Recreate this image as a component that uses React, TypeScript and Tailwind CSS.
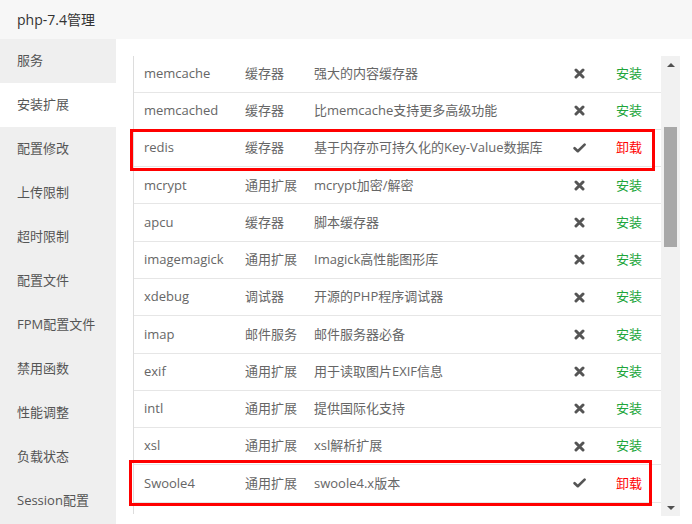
import React from 'react';

type Ext = {
  name: string;
  type: string;
  desc: string;
  installed: boolean;
};

const menu = [
  '服务',
  '安装扩展',
  '配置修改',
  '上传限制',
  '超时限制',
  '配置文件',
  'FPM配置文件',
  '禁用函数',
  '性能调整',
  '负载状态',
  'Session配置',
];

const exts: Ext[] = [
  { name: 'memcache', type: '缓存器', desc: '强大的内容缓存器', installed: false },
  { name: 'memcached', type: '缓存器', desc: '比memcache支持更多高级功能', installed: false },
  { name: 'redis', type: '缓存器', desc: '基于内存亦可持久化的Key-Value数据库', installed: true },
  { name: 'mcrypt', type: '通用扩展', desc: 'mcrypt加密/解密', installed: false },
  { name: 'apcu', type: '缓存器', desc: '脚本缓存器', installed: false },
  { name: 'imagemagick', type: '通用扩展', desc: 'Imagick高性能图形库', installed: false },
  { name: 'xdebug', type: '调试器', desc: '开源的PHP程序调试器', installed: false },
  { name: 'imap', type: '邮件服务', desc: '邮件服务器必备', installed: false },
  { name: 'exif', type: '通用扩展', desc: '用于读取图片EXIF信息', installed: false },
  { name: 'intl', type: '通用扩展', desc: '提供国际化支持', installed: false },
  { name: 'xsl', type: '通用扩展', desc: 'xsl解析扩展', installed: false },
  { name: 'Swoole4', type: '通用扩展', desc: 'swoole4.x版本', installed: true },
  { name: 'fileinfo', type: '通用扩展', desc: '通用扩展fileinfo库', installed: false },
];

const TimesIcon = () => (
  <svg width="11" height="11" viewBox="0 0 11 11" aria-hidden>
    <path d="M2 2 L9 9 M9 2 L2 9" stroke="#555" strokeWidth="3" strokeLinecap="round" />
  </svg>
);

const CheckIcon = () => (
  <svg width="13" height="10" viewBox="0 0 13 10" aria-hidden>
    <path d="M1.6 5.2 L4.8 8.2 L11.6 1.6" stroke="#555" strokeWidth="2.6" fill="none" strokeLinecap="round" strokeLinejoin="round" />
  </svg>
);

export default function App() {
  return (
    <div
      className="w-[692px] h-[524px] overflow-hidden bg-white flex flex-col text-[13px]"
      style={{ fontFamily: '"Open Sans", "Noto Sans", "Noto Sans CJK SC", sans-serif' }}
    >
      <div className="h-[39px] shrink-0 bg-[#f7f7f7] flex items-center pl-[17px] text-[14px] text-[#333]">
        php-7.4管理
      </div>
      <div className="flex flex-1 min-h-0">
        <div className="w-[116px] shrink-0 bg-[#efefef]">
          {menu.map((m, i) => (
            <div
              key={m}
              className={`h-[44px] flex items-center pl-[17px] text-[#555] ${i === 1 ? 'bg-white' : ''}`}
            >
              {m}
            </div>
          ))}
        </div>
        <div className="flex-1 relative pt-[17px] pl-[17px]">
          <div className="flex h-[460px] w-[547px]">
            <div className="w-[528px] h-[458px] border-l border-[#ddd] overflow-hidden">
              <div className="-mt-[0.6px]">
                {exts.map((e) => (
                  <div
                    key={e.name}
                    className="h-[37.27px] box-border border-b border-[#e6e6e6] flex items-center text-[#666]"
                  >
                    <div className="w-[101px] pl-[10px] shrink-0">{e.name}</div>
                    <div className="w-[69px] pl-[10px] shrink-0">{e.type}</div>
                    <div className="w-[253px] pl-[10px] shrink-0 whitespace-nowrap">{e.desc}</div>
                    <div className="w-[44px] shrink-0 flex justify-center">
                      {e.installed ? <CheckIcon /> : <TimesIcon />}
                    </div>
                    <div className={`pl-[15px] ${e.installed ? 'text-[#ff0000]' : 'text-[#20a53a]'}`}>
                      {e.installed ? '卸载' : '安装'}
                    </div>
                  </div>
                ))}
              </div>
            </div>
            <div className="w-[19px] shrink-0 bg-[#f1f1f1] flex flex-col items-center">
              <div className="h-[17px] flex items-center justify-center">
                <div className="w-0 h-0 border-l-[4px] border-r-[4px] border-b-[4px] border-l-transparent border-r-transparent border-b-[#505050]" />
              </div>
              <div className="flex-1 w-full px-[3px] pt-[54px]">
                <div className="h-[120px] bg-[#a8a8a8]" />
              </div>
              <div className="h-[17px] flex items-center justify-center">
                <div className="w-0 h-0 border-l-[4px] border-r-[4px] border-t-[4px] border-l-transparent border-r-transparent border-t-[#505050]" />
              </div>
            </div>
          </div>
          <div className="absolute left-[14px] top-[90px] w-[525px] h-[42px] border-[3px] border-[#ff0000]" />
          <div className="absolute left-[13px] top-[421px] w-[523px] h-[46px] border-[3px] border-[#ff0000]" />
        </div>
      </div>
    </div>
  );
}
